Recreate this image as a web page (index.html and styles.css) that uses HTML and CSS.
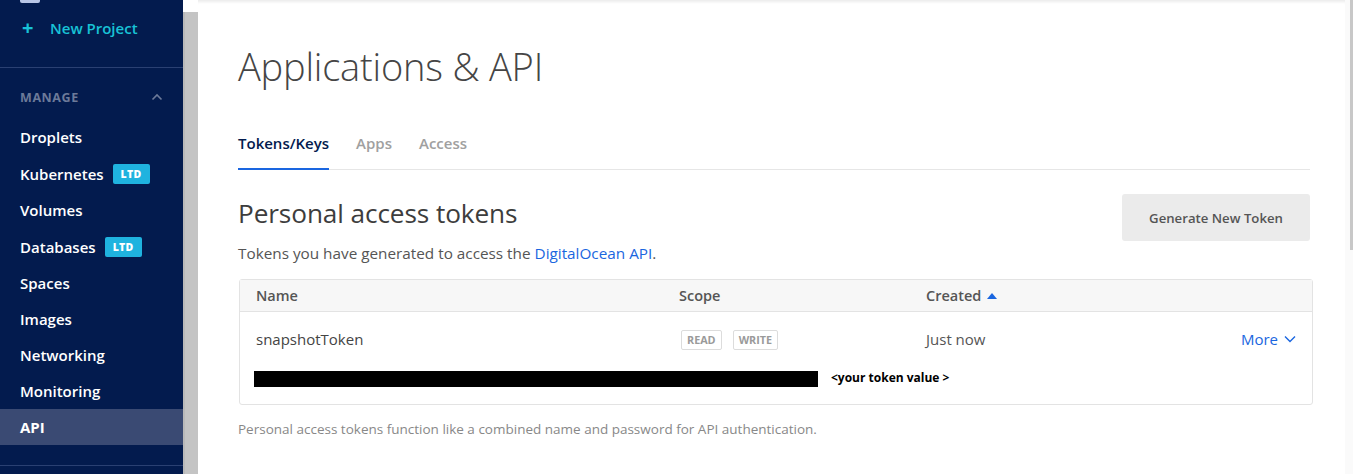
FILE: index.html
```html
<!DOCTYPE html>
<html>
<head>
<meta charset="utf-8">
<link rel="stylesheet" href="styles.css">
</head>
<body>
<div class="app">
  <aside class="sidebar">
    <div class="top-icon"></div>
    <div class="new-project"><span class="plus">+</span><span>New Project</span></div>
    <div class="divider"></div>
    <div class="section-head">
      <span>MANAGE</span>
      <svg class="chev" width="12" height="8" viewBox="0 0 12 8"><path d="M1.5 6.5 L6 2 L10.5 6.5" fill="none" stroke="#6c7a99" stroke-width="1.6"/></svg>
    </div>
    <nav class="nav">
      <div class="nav-item">Droplets</div>
      <div class="nav-item tall">Kubernetes <span class="ltd">LTD</span></div>
      <div class="nav-item">Volumes</div>
      <div class="nav-item tall">Databases <span class="ltd">LTD</span></div>
      <div class="nav-item">Spaces</div>
      <div class="nav-item">Images</div>
      <div class="nav-item">Networking</div>
      <div class="nav-item">Monitoring</div>
      <div class="nav-item active">API</div>
    </nav>
    <div class="bottom-divider"></div>
  </aside>
  <div class="gutter"><div class="gutter-bar"></div></div>
  <main class="main">
    <h1 class="title">Applications &amp; API</h1>
    <div class="tabs">
      <div class="tab active">Tokens/Keys</div>
      <div class="tab">Apps</div>
      <div class="tab">Access</div>
    </div>
    <div class="section-row">
      <h2 class="section-title">Personal access tokens</h2>
      <button class="btn">Generate New Token</button>
    </div>
    <p class="subtitle">Tokens you have generated to access the <a class="link">DigitalOcean API</a>.</p>
    <div class="table">
      <div class="thead">
        <div class="c-name">Name</div>
        <div class="c-scope">Scope</div>
        <div class="c-created sort">Created <svg width="10" height="6" viewBox="0 0 10 6"><path d="M0 6 L5 0 L10 6 Z" fill="#1a66e0"/></svg></div>
        <div class="c-more"></div>
      </div>
      <div class="trow">
        <div class="c-name">snapshotToken</div>
        <div class="c-scope scopes"><span class="scope">READ</span><span class="scope">WRITE</span></div>
        <div class="c-created">Just now</div>
        <div class="c-more more">More <svg width="12" height="8" viewBox="0 0 12 8"><path d="M1 1.5 L6 6.5 L11 1.5" fill="none" stroke="#1a66e0" stroke-width="1.4"/></svg></div>
      </div>
      <div class="token-row">
        <div class="redact"></div>
        <span class="token-note">&lt;your token value &gt;</span>
      </div>
    </div>
    <p class="footnote">Personal access tokens function like a combined name and password for API authentication.</p>
  </main>
  <div class="vscroll"><div class="vthumb"></div></div>
</div>
</body>
</html>
```

FILE: styles.css
```css
* { box-sizing: border-box; }
html, body { margin: 0; padding: 0; }
body {
  width: 1353px;
  height: 474px;
  overflow: hidden;
  font-family: "Open Sans", "Liberation Sans", sans-serif;
  background: #fff;
}
.app {
  display: flex;
  height: 474px;
}
.sidebar {
  width: 183px;
  flex: none;
  background: #031b4e;
  display: flex;
  flex-direction: column;
  color: #fff;
}
.top-icon {
  margin-left: 20px;
  width: 20px;
  height: 3px;
  background: #b8c6e6;
  border-radius: 0 0 2px 2px;
}
.new-project {
  display: flex;
  align-items: center;
  height: 50px;
  padding-left: 22px;
  color: #18c2d6;
  font-size: 15px;
  font-weight: 600;
}
.plus {
  width: 28px;
  font-size: 20px;
  font-weight: 700;
  line-height: 1;
}
.divider {
  height: 1px;
  background: #2a4072;
  margin-top: 14px;
}
.section-head {
  height: 44px;
  margin-top: 7px;
  display: flex;
  align-items: center;
  justify-content: space-between;
  padding: 0 20px;
  color: #6c7a99;
  font-size: 12.5px;
  font-weight: 700;
  letter-spacing: 0.6px;
}
.nav { display: flex; flex-direction: column; }
.nav-item {
  height: 36px;
  display: flex;
  align-items: center;
  padding-left: 20px;
  font-size: 15px;
  font-weight: 600;
  color: #fff;
}
.nav-item.tall { height: 37px; }
.nav-item.active {
  background: #3a4a73;
  font-weight: 700;
}
.ltd {
  display: inline-flex;
  align-items: center;
  justify-content: center;
  margin-left: 9px;
  height: 20px;
  padding: 0 8px;
  background: #1fb3df;
  border-radius: 2px;
  font-size: 10.5px;
  font-weight: 800;
  color: #fff;
  letter-spacing: 0.3px;
}
.bottom-divider {
  height: 1px;
  background: #2a4072;
  margin-top: 20px;
}
.gutter {
  width: 15px;
  flex: none;
  background: #fff;
  padding-top: 12px;
  display: flex;
}
.gutter-bar {
  flex: 1;
  background: #c4c4c4;
  border-left: 2px solid #b9b9b9;
}
.main {
  flex: 1;
  padding: 0 35px 0 40px;
  box-shadow: inset 0 4px 3px -2px #ececec;
  color: #444;
}
.title {
  margin: 43px 0 0;
  font-size: 38px;
  line-height: 46px;
  font-weight: 300;
  color: #454545;
  letter-spacing: -0.2px;
}
.tabs {
  margin-top: 31px;
  display: flex;
  gap: 27px;
  border-bottom: 1px solid #e6e6e6;
  height: 50px;
}
.tab {
  font-size: 15px;
  font-weight: 600;
  color: #a0a0a0;
  line-height: 20px;
  padding-top: 13px;
  height: 50px;
}
.tab.active {
  color: #031b4e;
  border-bottom: 2px solid #1a66e0;
}
.section-row {
  margin-top: 24px;
  display: flex;
  align-items: center;
  justify-content: space-between;
  height: 47px;
}
.section-title {
  margin: 0;
  padding-bottom: 9px;
  font-size: 26.2px;
  line-height: 34px;
  font-weight: 400;
  color: #3d3d3d;
  letter-spacing: -0.1px;
}
.btn {
  width: 188px;
  height: 47px;
  border: 0;
  border-radius: 3px;
  background: #ebebeb;
  color: #555;
  font-family: inherit;
  font-size: 13.2px;
  font-weight: 600;
}
.subtitle {
  margin: 1px 0 0;
  font-size: 15.3px;
  line-height: 22px;
  color: #555;
}
.link { color: #1a66e0; }
.table {
  margin-top: 15px;
  margin-right: -3px;
  margin-left: 1px;
  border: 1px solid #e3e3e3;
  border-radius: 3px;
}
.thead, .trow {
  display: grid;
  grid-template-columns: 423px 247px 1fr 120px;
  align-items: center;
  padding: 0 16px;
}
.thead {
  height: 32px;
  background: #f7f7f7;
  border-bottom: 1px solid #e3e3e3;
  font-size: 14.5px;
  font-weight: 600;
  color: #555;
}
.sort { color: #1a66e0; display: flex; align-items: center; gap: 6px; }
.trow {
  height: 54px;
  font-size: 15px;
  color: #444;
}
.c-created { color: #555; }
.scopes { padding-left: 2px; }
.scope {
  display: inline-flex;
  align-items: center;
  height: 20px;
  padding: 0 5px;
  margin-right: 11px;
  border: 1px solid #dcdcdc;
  border-radius: 2px;
  font-size: 10.8px;
  font-weight: 700;
  color: #9a9a9a;
}
.more {
  color: #1a66e0;
  display: flex;
  justify-content: flex-end;
  align-items: center;
  gap: 6px;
}
.token-row {
  display: flex;
  align-items: flex-start;
  padding-left: 14px;
  padding-top: 5px;
  height: 38px;
}
.redact {
  width: 564px;
  height: 16px;
  background: #000;
}
.token-note {
  margin-left: 13px;
  font-size: 12px;
  line-height: 14px;
  font-weight: 700;
  color: #000;
}
.footnote {
  margin: 15px 0 0;
  font-size: 13.5px;
  color: #888;
}
.vscroll {
  width: 8px;
  flex: none;
  background: #fafafa;
  display: flex;
  justify-content: flex-end;
}
.vthumb {
  width: 3px;
  height: 250px;
  background: #c8c8c8;
}
```
